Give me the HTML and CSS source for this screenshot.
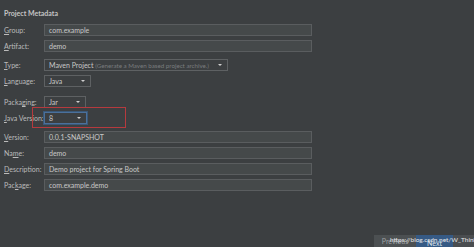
FILE: index.html
```html
<!DOCTYPE html>
<html lang="en">
<head>
    <meta charset="UTF-8">
    <title>Project Metadata</title>
    <link rel="stylesheet" href="styles.css">
</head>
<body>
    <div class="panel">
        <h1 class="title">Project Metadata</h1>
        <div class="form">
            <div class="row">
                <label><u>G</u>roup:</label>
                <div class="field">com.example</div>
            </div>
            <div class="row">
                <label><u>A</u>rtifact:</label>
                <div class="field">demo</div>
            </div>
            <div class="row gap-s">
                <label><u>T</u>ype:</label>
                <div class="combo type"><span class="text">Maven Project <span class="hint">(Generate a Maven based project archive.)</span></span><span class="arrow"></span></div>
            </div>
            <div class="row">
                <label><u>L</u>anguage:</label>
                <div class="combo lang">Java<span class="arrow"></span></div>
            </div>
            <div class="row gap-m">
                <label>Packa<u>g</u>ing:</label>
                <div class="combo pack">Jar<span class="arrow"></span></div>
            </div>
            <div class="row">
                <label><u>J</u>ava Version:</label>
                <div class="combo java focus">8<span class="arrow"></span></div>
            </div>
            <div class="row gap-s">
                <label><u>V</u>ersion:</label>
                <div class="field">0.0.1-SNAPSHOT</div>
            </div>
            <div class="row">
                <label>Na<u>m</u>e:</label>
                <div class="field">demo</div>
            </div>
            <div class="row">
                <label><u>D</u>escription:</label>
                <div class="field">Demo project for Spring Boot</div>
            </div>
            <div class="row">
                <label>Pac<u>k</u>age:</label>
                <div class="field">com.example.demo</div>
            </div>
        </div>
        <div class="mark"></div>
        <div class="footer">
            <button class="btn">Previous</button>
            <button class="btn primary">Next</button>
            <span class="watermark">https://blog.csdn.net/W_Think</span>
        </div>
    </div>
</body>
</html>
```

FILE: styles.css
```css
body {
    margin: 0;
    background: #3c3f41;
    font-family: Lato, "Open Sans", sans-serif;
    font-size: 7px;
    color: #bbbbbb;
}
.panel {
    position: relative;
    width: 474px;
    height: 247px;
    overflow: hidden;
}
.title {
    margin: 0;
    padding: 9px 0 0 4px;
    height: 15px;
    font-size: 7px;
    font-weight: 700;
    color: #c4c4c4;
}
.form {
    display: flex;
    flex-direction: column;
    gap: 4px;
}
.row {
    display: flex;
    align-items: center;
    height: 12px;
}
.gap-s {
    margin-top: 3px;
}
.gap-m {
    margin-top: 5px;
}
label {
    flex: none;
    width: 40px;
    padding-left: 4px;
    white-space: nowrap;
}
u {
    text-decoration-thickness: 1px;
}
.field, .combo {
    box-sizing: border-box;
    height: 12px;
    line-height: 10px;
    padding: 0 0 0 4px;
    background: #45494a;
    border: 1px solid #5a5d5f;
    color: #c8c8c8;
    white-space: nowrap;
}
.field {
    width: 268px;
}
.combo {
    position: relative;
    background: #3c3f41;
    border-color: #5e6163;
}
.combo .arrow {
    position: absolute;
    right: 5px;
    top: 4px;
    border-left: 2.5px solid transparent;
    border-right: 2.5px solid transparent;
    border-top: 2.5px solid #cfcfcf;
}
.type { width: 184px; padding-right: 12px; }
.type .text {
    display: block;
    overflow: hidden;
}
.lang { width: 47px; }
.pack { width: 42px; }
.java { width: 43px; }
.hint {
    font-size: 6.2px;
    color: #7a7d7f;
}
.focus {
    border-color: #4b709b;
    box-shadow: 0 0 0 1px #3a5878;
}
.mark {
    position: absolute;
    left: 32px;
    top: 107px;
    width: 92px;
    height: 19px;
    border: 1px solid #b53a3e;
}
.footer {
    position: absolute;
    left: 374px;
    top: 235px;
    right: 0;
    height: 12px;
    display: flex;
    align-items: center;
    background: #4a4d50;
}
.btn {
    height: 12px;
    padding: 0;
    border: none;
    font-family: inherit;
    font-size: 7px;
    color: #9da0a2;
    background: #4c5052;
}
.btn:first-child {
    width: 42px;
}
.primary {
    width: 37px;
    background: #365a85;
    color: #dfe5ec;
    padding-top: 3px;
}
.watermark {
    position: absolute;
    left: 16px;
    top: 1px;
    font-size: 6.5px;
    color: #e6e8ea;
    white-space: nowrap;
}
```
